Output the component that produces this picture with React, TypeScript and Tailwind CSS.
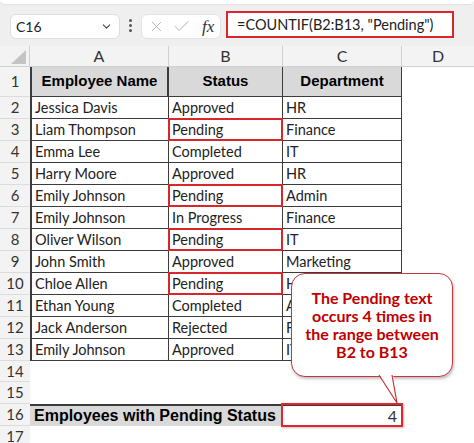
import { ChevronDown, X, Check } from 'lucide-react';

type Row = { num: number; name: string; status: string; dept: string; pending?: boolean };

const rows: Row[] = [
  { num: 2, name: 'Jessica Davis', status: 'Approved', dept: 'HR' },
  { num: 3, name: 'Liam Thompson', status: 'Pending', dept: 'Finance', pending: true },
  { num: 4, name: 'Emma Lee', status: 'Completed', dept: 'IT' },
  { num: 5, name: 'Harry Moore', status: 'Approved', dept: 'HR' },
  { num: 6, name: 'Emily Johnson', status: 'Pending', dept: 'Admin', pending: true },
  { num: 7, name: 'Emily Johnson', status: 'In Progress', dept: 'Finance' },
  { num: 8, name: 'Oliver Wilson', status: 'Pending', dept: 'IT', pending: true },
  { num: 9, name: 'John Smith', status: 'Approved', dept: 'Marketing' },
  { num: 10, name: 'Chloe Allen', status: 'Pending', dept: 'HR', pending: true },
  { num: 11, name: 'Ethan Young', status: 'Completed', dept: 'Admin' },
  { num: 12, name: 'Jack Anderson', status: 'Rejected', dept: 'Finance' },
  { num: 13, name: 'Emily Johnson', status: 'Approved', dept: 'IT' },
];

function RowNum({ n, h }: { n: number; h: string }) {
  return (
    <div className={`w-[30px] ${h} shrink-0 bg-[#f3f3f3] border-b border-[#dcdcdc] flex items-center justify-center text-[15px] text-[#333]`}>
      {n}
    </div>
  );
}

function App() {
  return (
    <div
      className="relative w-[474px] h-[443px] overflow-hidden bg-white text-[#222]"
      style={{ fontFamily: 'Lato, "Noto Sans", sans-serif' }}
    >
      {/* toolbar */}
      <div className="h-[46px] bg-[#efefef] relative">
        <div className="h-[5px] bg-white border-b border-[#e2e2e2] rounded-b-md" />
        <div className="flex items-start">
          <div className="ml-[10px] mt-[9px] w-[110px] h-[25px] bg-white border border-[#dedede] rounded-md flex items-center justify-between pl-[5px] pr-[6px]">
            <span className="text-[14px] text-[#222]">C16</span>
            <ChevronDown size={13} strokeWidth={2} className="text-[#444]" />
          </div>
          <div className="ml-[9px] mt-[14px] flex flex-col gap-[2px]">
            <span className="w-[3px] h-[3px] rounded-full bg-[#555]" />
            <span className="w-[3px] h-[3px] rounded-full bg-[#555]" />
            <span className="w-[3px] h-[3px] rounded-full bg-[#555]" />
          </div>
          <div className="ml-[9px] mt-[9px] w-[80px] h-[25px] bg-white border border-[#e2e2e2] rounded-md flex items-center pl-[6px]">
            <X size={17} strokeWidth={1.2} className="text-[#aaa]" />
            <Check size={19} strokeWidth={1.2} className="text-[#aaa] ml-[7px]" />
            <span
              className="ml-[11px] text-[17px] italic text-[#333]"
              style={{ fontFamily: '"Liberation Serif", serif' }}
            >
              fx
            </span>
          </div>
          <div className="ml-[5px] mt-[6px] w-[228px] h-[27px] bg-white border-2 border-[#d9262b] flex items-center pl-[9px]">
            <span className="text-[14.5px] text-[#222]">=COUNTIF(B2:B13, "Pending")</span>
          </div>
        </div>
      </div>

      {/* column header */}
      <div className="flex h-[21px] bg-[#f3f3f3] border-b border-[#cfcfcf] text-[16px] text-[#333]">
        <div className="w-[30px] shrink-0 flex items-end justify-end pr-[3px] pb-[2px] border-r border-[#cfcfcf]">
          <svg width="15" height="14" viewBox="0 0 15 14">
            <polygon points="15,0 15,14 0,14" fill="#c4c4c4" />
          </svg>
        </div>
        <div className="w-[139px] shrink-0 flex items-center justify-center border-r border-[#cfcfcf]">A</div>
        <div className="w-[114px] shrink-0 flex items-center justify-center border-r border-[#cfcfcf]">B</div>
        <div className="w-[119px] shrink-0 flex items-center justify-center border-r border-[#cfcfcf]">C</div>
        <div className="w-[72px] shrink-0 flex items-center justify-center">D</div>
      </div>

      {/* row 1 header */}
      <div className="flex h-[30px]">
        <RowNum n={1} h="h-[30px]" />
        <div
          className="flex bg-[#d9d9d9] text-[15px] font-bold text-black"
          style={{ fontFamily: '"Liberation Sans", Arial, sans-serif' }}
        >
          <div className="w-[139px] flex items-end justify-center pb-[4px] border-x-2 border-b border-[#3c3c3c]">Employee Name</div>
          <div className="w-[114px] flex items-end justify-center pb-[4px] border-r border-b border-[#3c3c3c]">Status</div>
          <div className="w-[119px] flex items-end justify-center pb-[4px] border-r border-b border-[#3c3c3c]">Department</div>
        </div>
      </div>

      {/* data rows */}
      {rows.map(r => (
        <div key={r.num} className="flex h-[22px] text-[14.5px]">
          <RowNum n={r.num} h="h-[22px]" />
          <div className="w-[139px] flex items-center pl-[3px] border-l-2 border-r border-b border-[#3c3c3c]">{r.name}</div>
          <div className="relative w-[114px] flex items-center pl-[3px] border-r border-b border-[#3c3c3c]">
            {r.status}
            {r.pending && (
              <div className="absolute -left-[1px] -top-[1px] -right-[1px] -bottom-[1px] border-2 border-[#d9262b]" />
            )}
          </div>
          <div className="w-[119px] flex items-center pl-[3px] border-r border-b border-[#3c3c3c]">{r.dept}</div>
        </div>
      ))}

      {/* empty rows */}
      <div className="flex h-[21px]">
        <RowNum n={14} h="h-[21px]" />
      </div>
      <div className="flex h-[22px]">
        <RowNum n={15} h="h-[22px]" />
      </div>

      {/* row 16 */}
      <div className="flex h-[22px]">
        <RowNum n={16} h="h-[22px]" />
        <div
          className="w-[253px] bg-[#d9d9d9] border-t-2 border-[#3c3c3c] flex items-center pl-[4px] text-[16px] font-bold text-black"
          style={{ fontFamily: '"Liberation Sans", Arial, sans-serif' }}
        >
          Employees with Pending Status
        </div>
        <div className="relative w-[119px] border-t-2 border-[#3c3c3c] flex items-center justify-end pr-[5px] text-[16px] text-[#333]">
          4
          <div className="absolute -left-[2px] -top-[3px] -right-[1px] -bottom-[1px] border-2 border-[#e3262b] shadow-[1px_1px_2px_rgba(0,0,0,0.25)]" />
        </div>
      </div>
      <div className="flex h-[22px]">
        <RowNum n={17} h="h-[22px]" />
      </div>

      {/* callout */}
      <div className="absolute left-[291px] top-[273px] w-[162px] h-[104px] bg-white border-[1.5px] border-[#c9343a] rounded-[14px] shadow-[1px_2px_3px_rgba(0,0,0,0.25)] flex flex-col items-center justify-center">
        <div className="flex flex-col items-center text-[16px] leading-[18px] font-bold text-[#c00000]">
          <span>The Pending text</span>
          <span>occurs 4 times in</span>
          <span>the range between</span>
          <span>B2 to B13</span>
        </div>
      </div>
      <svg className="absolute left-[376px] top-[374px]" width="24" height="32" viewBox="0 0 24 32">
        <polygon points="3,0 17,0 21,29" fill="white" />
        <polyline points="3,1 21,29 16,1" fill="none" stroke="#c9343a" strokeWidth="1.2" />
      </svg>
    </div>
  );
}

export default App;
